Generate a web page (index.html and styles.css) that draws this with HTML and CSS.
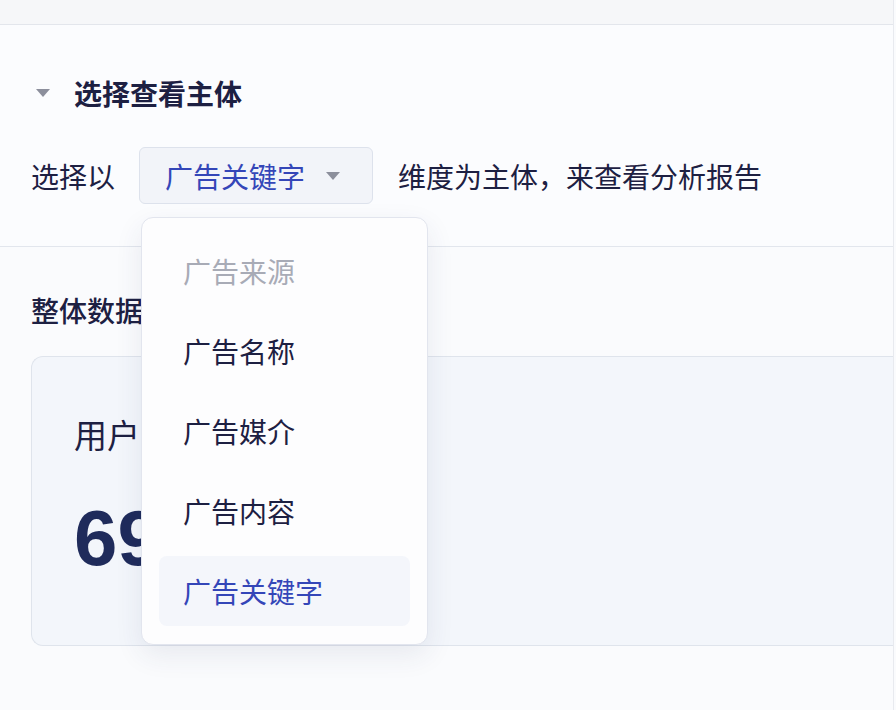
FILE: index.html
```html
<!DOCTYPE html>
<html lang="zh-CN">
<head>
    <meta charset="utf-8"/>
    <meta name="viewport" content="width=device-width, initial-scale=1"/>
    <title>选择查看主体</title>
    <link rel="stylesheet" href="styles.css">
</head>
<body>

<div class="page">
    <div class="topbar"></div>

    <!-- subject picker -->
    <section class="subject">
        <h2 class="subject__title">
            <span class="caret caret--title"></span>
            选择查看主体
        </h2>
        <div class="subject__row">
            <span>选择以</span>
            <div class="select">
                <button class="select__trigger">
                    <span>广告关键字</span>
                    <span class="caret"></span>
                </button>
                <ul class="select__menu">
                    <li class="select__option select__option--disabled">广告来源</li>
                    <li class="select__option">广告名称</li>
                    <li class="select__option">广告媒介</li>
                    <li class="select__option">广告内容</li>
                    <li class="select__option select__option--active">广告关键字</li>
                </ul>
            </div>
            <span class="subject__tail">维度为主体，来查看分析报告</span>
        </div>
    </section>

    <!-- overview -->
    <section class="overview">
        <h3 class="overview__title">整体数据</h3>
        <div class="stat_card">
            <div class="stat_card__label">用户</div>
            <div class="stat_card__value">6984</div>
        </div>
    </section>
</div>

</body>
</html>
```

FILE: styles.css
```css
html {
    height: 100%;
}

body {
    margin: 0;
    height: 100%;
    background-color: #fafbfd;
    color: #1d2042;
    font-family: "Noto Sans CJK SC", "Noto Sans", sans-serif;
    font-size: 28px;
    overflow: hidden;
}

.page {
    width: 893px;
    height: 100%;
    border-right: 1px solid #e8eaef;
}

.topbar {
    height: 24px;
    background-color: #f6f7f9;
    border-bottom: 1px solid #e3e6ec;
}

/* triangles */
.caret {
    display: inline-block;
    width: 0;
    height: 0;
    border-left: 7px solid transparent;
    border-right: 7px solid transparent;
    border-top: 8px solid #8c8f9c;
}

.caret--title {
    margin: 0 24px 0 5px;
}

.subject {
    background-color: #fbfcfe;
    border-bottom: 1px solid #e2e6ed;
    padding: 48px 31px 42px;
}

.subject__title {
    display: flex;
    align-items: center;
    margin: 0;
    height: 40px;
    font-size: 28px;
    font-weight: 700;
    line-height: 40px;
}

.subject__row {
    display: flex;
    align-items: center;
    gap: 24px;
    margin-top: 34px;
    line-height: 40px;
}

.subject__tail {
    margin-left: 1px;
}

.select {
    position: relative;
}

.select__trigger {
    display: flex;
    align-items: center;
    justify-content: space-between;
    box-sizing: border-box;
    width: 234px;
    height: 57px;
    padding: 0 32px 0 25px;
    background-color: #f2f4f9;
    border: 1px solid #dde2ec;
    border-radius: 6px;
    color: #3446b8;
    font-family: inherit;
    font-size: 28px;
}

.select__menu {
    position: absolute;
    z-index: 2;
    top: 70px;
    left: 2px;
    box-sizing: border-box;
    width: 287px;
    margin: 0;
    padding: 18px 17px;
    list-style: none;
    background-color: #fdfdfe;
    border: 1px solid #e2e5ee;
    border-radius: 12px;
    box-shadow: 0 10px 28px rgba(40, 50, 100, 0.09);
    display: flex;
    flex-direction: column;
    gap: 10px;
}

.select__option {
    height: 70px;
    line-height: 70px;
    padding-left: 24px;
    border-radius: 8px;
}

.select__option--disabled {
    color: #a8abb6;
}

.select__option--active {
    color: #3446b8;
    background-color: #f4f6fb;
}

.overview {
    padding: 43px 0 0 31px;
}

.overview__title {
    margin: 0;
    font-size: 28px;
    font-weight: 500;
    line-height: 40px;
}

.stat_card {
    box-sizing: border-box;
    height: 290px;
    margin-top: 26px;
    padding: 57px 42px 0;
    background-color: #f3f6fb;
    border: 1px solid #dfe4ec;
    border-right: none;
    border-radius: 12px 0 0 12px;
}

.stat_card__label {
    font-size: 33px;
    line-height: 40px;
}

.stat_card__value {
    margin-top: 45px;
    color: #1f2b5b;
    font-family: "Liberation Sans", Arial, sans-serif;
    font-size: 78px;
    font-weight: 700;
    line-height: 78px;
}
```
